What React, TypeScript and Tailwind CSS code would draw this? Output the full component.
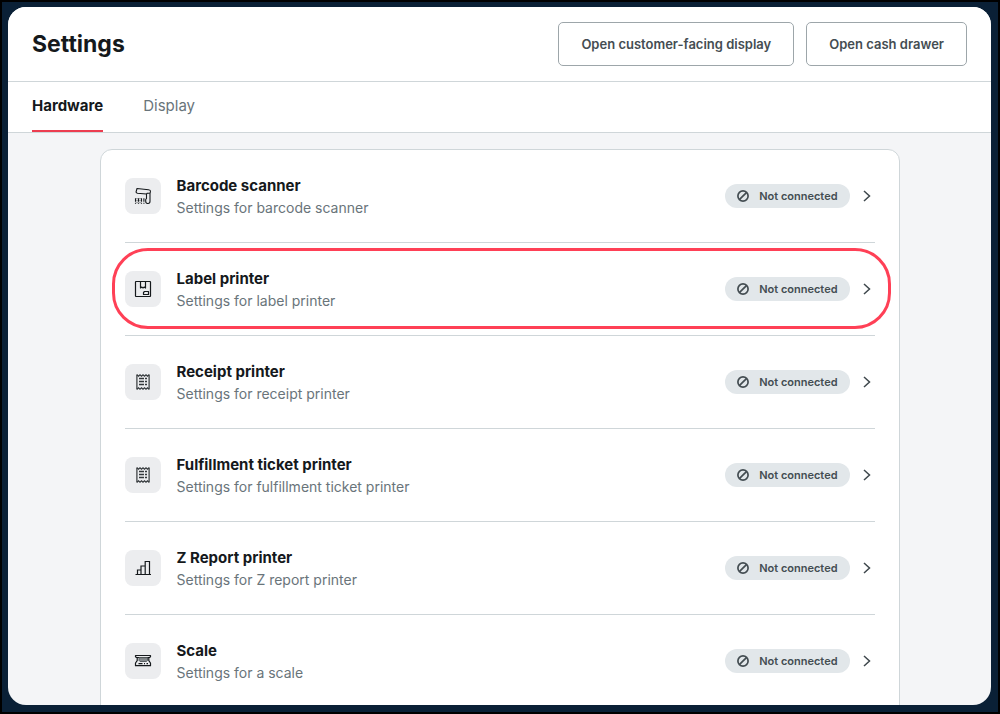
import React, { useState } from 'react';

type Device = {
  name: string;
  description: string;
  icon: React.ReactNode;
  highlighted?: boolean;
};

const BarcodeScannerIcon = () => (
  <svg width="18" height="18" viewBox="0 0 18 18" fill="none" stroke="#15191c" strokeWidth="1.1" strokeLinejoin="round" aria-hidden="true">
    <path d="M3 1.500 14.500 2.800c1.500.2 2.100.8 2 1.600l-.5 1.900H13.300L12.400 7 3.300 6.300 2 5.200Z" />
    <path d="M12.500 7v4.500l-.8 1v1.800c0 1.300.7 2.200 1.900 2.200h.5c1.300 0 1.900-.8 1.900-2.200V6.500" />
    <path d="M1.500 11.200v5.500M4.500 11.200v5.500M7.500 11.200v5.500M9.900 11.200v5.500" strokeDasharray="3.5 1" />
    <path d="M3 11.200v5.500M6 11.200v5.500" strokeDasharray="1 1" strokeWidth="0.8" />
  </svg>
);

const LabelPrinterIcon = () => (
  <svg width="18" height="18" viewBox="0 0 18 18" fill="none" stroke="#15191c" strokeWidth="1.2" strokeLinejoin="round" aria-hidden="true">
    <rect x="1.5" y="1.5" width="15" height="15" rx="0.5" />
    <path d="M6.500 1.500v6.500l1.200-.9 1.300.9 1.300-.9 1.200.9V1.500" />
    <path d="M9.500 14.500v-2l1-1h4v3Z" />
  </svg>
);

const ReceiptIcon = () => (
  <svg width="18" height="18" viewBox="0 0 18 18" fill="none" stroke="#33383b" aria-hidden="true">
    <path d="M2.900 1.500v15M15.100 1.500v15" strokeWidth="1.2" />
    <path d="M3 1.800l1.500 1.400L6 1.800l1.500 1.400L9 1.800l1.500 1.400L12 1.800l1.500 1.400L15 1.800M3 16.200l1.500-1.400L6 16.200l1.500-1.400L9 16.200l1.500-1.400 1.500 1.400 1.500-1.400 1.500 1.400" strokeWidth="1.2" />
    <path d="M5 5.500h5M5 8.500h5M5 11.500h5M11 5.500h2M11 8.500h2M11 11.500h2" strokeWidth="1.4" />
  </svg>
);

const ReportIcon = () => (
  <svg width="18" height="18" viewBox="0 0 18 18" fill="none" stroke="#15191c" strokeWidth="1.2" aria-hidden="true">
    <path d="M1.500 15.500h15.500M3.500 15.500V11h3.500M7 15.500V7h4M7 11v4.500M11.200 15.500V2.500h4.300v13" />
  </svg>
);

const ScaleIcon = () => (
  <svg width="18" height="18" viewBox="0 0 18 18" fill="none" stroke="#15191c" strokeLinejoin="round" aria-hidden="true">
    <path d="M1.500 3.500v1.300l1 .7h13l1-.7V3.500Z" strokeWidth="1.2" />
    <path d="M5 5.700h8.500v2.800l-1 1H6l-1-1Z" fill="#858a8d" stroke="#5a6063" />
    <path d="M3.200 5.700v3L1.500 11v2.700h15V11l-1.700-2.300v-3" strokeWidth="1.2" />
    <path d="M4.500 11.700h4M10 11.700h1M12.500 11.700h1.500" strokeWidth="1.2" />
  </svg>
);

const BlockedIcon = () => (
  <svg width="12" height="12" viewBox="0 0 12 12" fill="none" stroke="#444d52" strokeWidth="1.7" aria-hidden="true">
    <circle cx="6" cy="6" r="5.1" />
    <path d="M2.600 9.400l6.800-6.800" />
  </svg>
);

const ChevronIcon = () => (
  <svg width="16" height="16" viewBox="0 0 16 16" fill="none" stroke="#3f484d" strokeWidth="1.5" aria-hidden="true">
    <path d="M5 3l5.500 5L5 13" />
  </svg>
);

const devices: Device[] = [
  { name: 'Barcode scanner', description: 'Settings for barcode scanner', icon: <BarcodeScannerIcon /> },
  { name: 'Label printer', description: 'Settings for label printer', icon: <LabelPrinterIcon />, highlighted: true },
  { name: 'Receipt printer', description: 'Settings for receipt printer', icon: <ReceiptIcon /> },
  { name: 'Fulfillment ticket printer', description: 'Settings for fulfillment ticket printer', icon: <ReceiptIcon /> },
  { name: 'Z Report printer', description: 'Settings for Z report printer', icon: <ReportIcon /> },
  { name: 'Scale', description: 'Settings for a scale', icon: <ScaleIcon /> },
];

const tabs = ['Hardware', 'Display'];

const DeviceRow: React.FC<{ device: Device }> = ({ device }) => (
  <li className="relative border-b border-[#cfd6d9]">
    <button type="button" className="flex w-full items-center gap-4 py-[23px] text-left">
      <span className="flex h-9 w-9 shrink-0 items-center justify-center rounded-lg bg-[#ecedef]">
        {device.icon}
      </span>
      <span className="min-w-0 flex-1 pt-0.5">
        <span className="block text-[15px] leading-[22px] font-bold text-[#15191c]">{device.name}</span>
        <span className="block text-[14px] leading-[22px] text-[#69747a]">{device.description}</span>
      </span>
      <span className="flex shrink-0 items-center gap-[9px]">
        <span className="flex h-6 items-center gap-[10px] rounded-full bg-[#e2e7ea] px-3 text-[11px] font-semibold text-[#444d52]">
          <BlockedIcon />
          Not connected
        </span>
        <ChevronIcon />
      </span>
    </button>
    {device.highlighted && (
      <span className="pointer-events-none absolute -left-[13px] -right-4 top-[5px] bottom-[6px] rounded-[36px] border-3 border-[#ff4056]" />
    )}
  </li>
);

const App: React.FC = () => {
  const [activeTab, setActiveTab] = useState('Hardware');

  return (
    <div className="h-screen overflow-hidden border-2 border-black bg-[#0a2036] pt-[5px] pr-[7px] pb-[7px] pl-[6px] font-['Inter',sans-serif]">
      <div className="flex h-full flex-col overflow-hidden rounded-[18px] bg-[#f4f5f7]">
        <header className="flex items-center justify-between border-b border-[#cfd6d9] bg-white px-6 py-[15px]">
          <h1 className="text-[23px] leading-7 font-bold text-[#15191c]">Settings</h1>
          <div className="flex gap-3">
            <button type="button" className="h-11 rounded-[5px] border border-[#9da6aa] px-[22px] pt-0.5 text-[13px] font-semibold text-[#444d52]">
              Open customer-facing display
            </button>
            <button type="button" className="h-11 rounded-[5px] border border-[#9da6aa] px-[22px] pt-0.5 text-[13px] font-semibold text-[#444d52]">
              Open cash drawer
            </button>
          </div>
        </header>
        <nav className="flex gap-10 border-b border-[#cfd6d9] bg-white px-6">
          {tabs.map((tab) => (
            <button
              key={tab}
              type="button"
              onClick={() => setActiveTab(tab)}
              className={`h-[50px] border-b-2 text-[15px] ${
                activeTab === tab
                  ? 'border-[#ec3d50] font-bold text-[#15191c]'
                  : 'border-transparent text-[#69747a]'
              }`}
            >
              {tab}
            </button>
          ))}
        </nav>
        <main className="min-h-0 flex-1 overflow-hidden px-6 pt-4">
          <ul className="mx-auto max-w-[800px] rounded-xl border border-[#cfd6d9] bg-white px-6 pb-6">
            {devices.map((device) => (
              <DeviceRow key={device.name} device={device} />
            ))}
          </ul>
        </main>
      </div>
    </div>
  );
};

export default App;
